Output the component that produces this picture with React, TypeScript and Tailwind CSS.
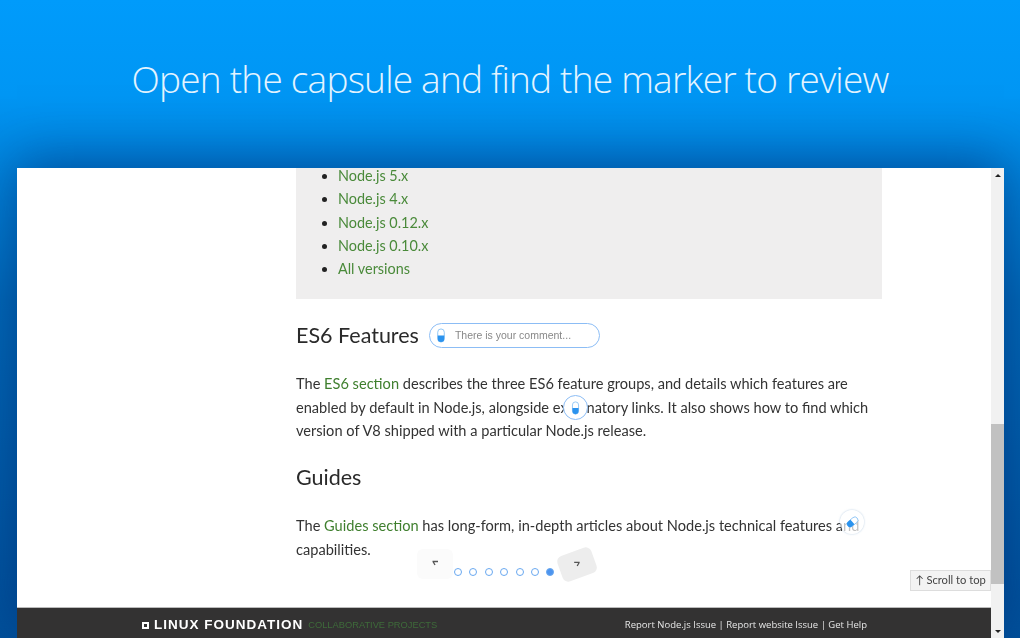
import React from 'react'

const versions = ['Node.js 5.x', 'Node.js 4.x', 'Node.js 0.12.x', 'Node.js 0.10.x', 'All versions']
const dots = [0, 1, 2, 3, 4, 5, 6]

const Capsule = ({ className = '' }: { className?: string }) => (
  <svg className={className} viewBox="0 0 10 16" fill="none">
    <rect x="1.5" y="1" width="7" height="14" rx="3.5" stroke="#8cc4f5" strokeWidth="1" fill="#fff" />
    <path d="M1.5 8h7v3.5a3.5 3.5 0 0 1-7 0z" fill="#2b93ee" />
  </svg>
)

const App = () => {
  return (
    <div className="flex h-[638px] w-[1020px] flex-col overflow-hidden bg-[linear-gradient(180deg,#009bfb_0px,#0096f4_95px,#0084dc_170px,#0069b8_300px,#00509a_638px)] font-['Lato',sans-serif]">
      <header className="flex h-[168px] shrink-0 items-start justify-center pt-[51px]">
        <h1 className="text-[37px] leading-[56px] font-light tracking-[-0.78px] text-[#e4f4ff] font-['Open_Sans',sans-serif]">
          Open the capsule and find the marker to review
        </h1>
      </header>

      <div className="relative ml-[17px] flex w-[987px] flex-1 bg-white shadow-[0_-8px_50px_rgba(0,40,110,0.55)]">
        <div className="flex min-w-0 flex-1 flex-col">
          <main className="min-h-0 flex-1 overflow-hidden pl-[279px] pr-[109px] blur-[0.35px]">
            <div className="-mt-[4px] bg-[#efeeee] pb-[19px] pl-[42px]">
              <ul className="list-disc pl-0 text-[14.4px] leading-[23.3px] text-[#4a8a3a] marker:text-[#222]">
                {versions.map(v => (
                  <li key={v}>{v}</li>
                ))}
              </ul>
            </div>

            <div className="mt-[21px] flex items-center gap-[10px]">
              <h2 className="text-[21.5px] leading-[30px] text-[#2a2a2a]">ES6 Features</h2>
              <div className="flex h-[25px] w-[171px] items-center gap-[9px] rounded-full border border-[#8cbdf5] pl-[6px] font-['Liberation_Sans',sans-serif] text-[10.5px] text-[#888]">
                <Capsule className="h-[15px] w-[10px]" />
                <span>There is your comment...</span>
              </div>
            </div>

            <p className="mt-[22px] text-[14.6px] leading-[23.3px] text-[#333]">
              The <span className="text-[#3f7f2e]">ES6 section</span> describes the three ES6 feature groups, and details which features are enabled by default in Node.js, alongside explanatory links. It also shows how to find which version of V8 shipped with a particular Node.js release.
            </p>

            <h2 className="mt-[20px] text-[21.5px] leading-[30px] text-[#2a2a2a]">Guides</h2>

            <p className="mt-[22px] text-[14.6px] leading-[23.3px] text-[#333]">
              The <span className="text-[#3f7f2e]">Guides section</span> has long-form, in-depth articles about Node.js technical features and capabilities.
            </p>
          </main>

          <footer className="flex h-[31px] shrink-0 items-center justify-between border-t border-[#bbb] bg-[#333232] pl-[125px] pr-[124px] pt-[5px] text-[9.5px] text-[#e6e6e6] blur-[0.35px]">
            <div className="flex items-center gap-[5px]">
              <span className="h-[7px] w-[7px] border-2 border-white" />
              <span className="text-[13.5px] font-bold tracking-[1px] text-white font-['Liberation_Sans',sans-serif]">LINUX FOUNDATION</span>
              <span className="text-[9.3px] text-[#3e6b3a] font-['Liberation_Sans',sans-serif]">COLLABORATIVE PROJECTS</span>
            </div>
            <div className="font-['Open_Sans',sans-serif]">Report Node.js Issue | Report website Issue | Get Help</div>
          </footer>
        </div>

        <div className="flex w-[13px] shrink-0 flex-col bg-[#f1f1f1]">
          <div className="flex h-[13px] items-center justify-center">
            <span className="mt-[1px] border-x-[3px] border-b-[3px] border-x-transparent border-b-[#222]" />
          </div>
          <div className="mt-[243px] h-[160px] bg-[#c1c1c1]" />
          <div className="mt-auto flex h-[13px] items-center justify-center">
            <span className="border-x-[3px] border-t-[3px] border-x-transparent border-t-[#222]" />
          </div>
        </div>

        {/* overlays */}
        <div className="absolute left-[546px] top-[227px] flex h-[25px] w-[25px] items-center justify-center rounded-full border border-[#8cbdf5] bg-white">
          <Capsule className="h-[14px] w-[9px]" />
        </div>
        <div className="absolute left-[823px] top-[342px] flex h-[24px] w-[24px] items-center justify-center rounded-full bg-white/70 shadow-[0_0_2px_rgba(120,160,200,0.6)]">
          <Capsule className="h-[14px] w-[9px] rotate-[50deg]" />
        </div>

        <div className="absolute left-[400px] top-[389px] flex items-center">
          <div className="flex h-[30px] w-[36px] -translate-y-[8px] items-center justify-center rounded-[6px] bg-[#fbfbfb]">
            <svg className="h-[8px] w-[8px]" viewBox="0 0 8 8" fill="none" stroke="#555" strokeWidth="1.3">
              <path d="M7 1.5H1.5M2 1.5l2 3.5" />
            </svg>
          </div>
          <div className="ml-[1px] flex items-center gap-[7.4px]">
            {dots.map(d => (
              <span key={d} className={`h-[8px] w-[8px] rounded-full border border-[#69a8f0] ${d === 6 ? 'bg-[#4d94ee]' : 'bg-white'}`} />
            ))}
          </div>
          <div className="ml-[5px] flex h-[27px] w-[36px] -translate-y-[8px] -rotate-[20deg] items-center justify-center rounded-[6px] bg-[#ededed]">
            <svg className="h-[8px] w-[8px] rotate-[20deg]" viewBox="0 0 8 8" fill="none" stroke="#555" strokeWidth="1.3">
              <path d="M1 1.5h5.5M6 1.5L4 5" />
            </svg>
          </div>
        </div>

        <div className="absolute left-[893px] top-[402px] flex h-[21px] w-[81px] items-center justify-center border border-[#ddd] bg-[#f3f3f3] text-[11.2px] text-[#444] blur-[0.3px]">
          ↑ Scroll to top
        </div>
      </div>
    </div>
  )
}

export default App
